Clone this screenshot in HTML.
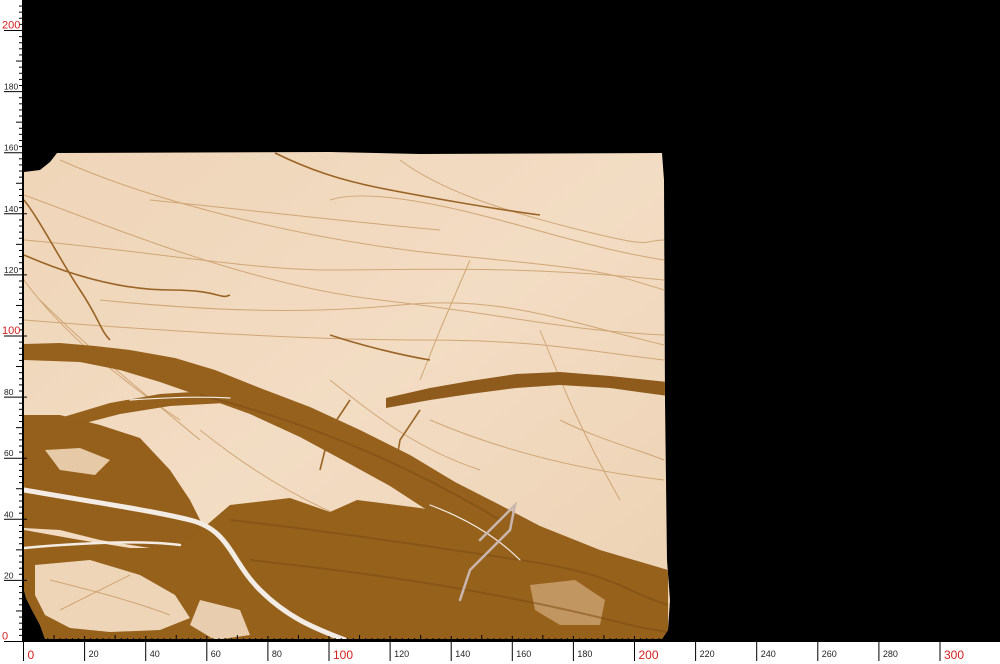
<!DOCTYPE html>
<html><head><meta charset="utf-8"><style>
html,body{margin:0;padding:0;background:#fff;width:1000px;height:664px;overflow:hidden}
svg{display:block}
text{font-family:"Liberation Sans",sans-serif}
</style></head><body>
<svg id="s" width="1000" height="664" viewBox="0 0 1000 664" xmlns="http://www.w3.org/2000/svg">
<rect x="0" y="0" width="1000" height="664" fill="#fff"/>
<rect x="23" y="0" width="977" height="641" fill="#000"/>
<defs>
<linearGradient id="bg" x1="0" y1="0" x2="1" y2="1">
<stop offset="0" stop-color="#efd5b8"/><stop offset="0.5" stop-color="#f2dcc3"/><stop offset="1" stop-color="#edd2b3"/>
</linearGradient>
<clipPath id="slab"><path d="M24,172 L40,170 L50,162 L57,153 L330,152 L420,154 L662,153 L664,180 L665,400 L667,560 L670,600 L668,630 L662,639 L45,639 L40,625 L32,610 L26,598 L24,590 Z"/></clipPath>
</defs>
<g clip-path="url(#slab)">
<rect x="20" y="150" width="660" height="495" fill="url(#bg)"/>
<g fill="none" stroke="#c89a64" stroke-width="1" opacity="0.8">
<path d="M24,195 C120,230 250,285 380,300 S560,330 664,335"/>
<path d="M60,160 C150,200 300,240 450,255 S600,270 664,290"/>
<path d="M24,240 C140,250 250,270 330,270 S520,265 664,280"/>
<path d="M100,300 C200,310 300,315 400,305 S560,320 664,345"/>
<path d="M24,320 C150,330 300,340 420,340 S580,350 664,360"/>
<path d="M330,200 C360,190 420,200 480,215 S600,250 664,260"/>
<path d="M150,200 C250,210 330,220 440,230"/>
<path d="M400,160 C440,190 500,210 580,230 S640,240 664,240"/>
<path d="M330,380 C380,420 420,450 480,470"/>
<path d="M430,420 C500,450 580,470 664,480"/>
<path d="M200,430 C250,470 300,500 350,520"/>
<path d="M560,420 C600,440 640,450 664,460"/>
<path d="M470,260 L440,330 L420,380"/>
<path d="M540,330 C560,380 580,430 620,500"/>
<path d="M24,430 C100,470 150,520 200,560"/>
<path d="M24,280 C60,330 120,380 180,420"/>
<path d="M40,300 C90,350 140,390 200,440"/>
</g>
<g fill="none" stroke="#9a6426" stroke-width="1.6">
<path d="M275,153 C310,170 340,180 380,188 S500,210 540,215"/>
<path d="M24,255 C70,275 120,290 170,290 S220,300 230,295"/>
<path d="M24,200 C40,220 60,260 80,290 S100,330 110,340"/>
<path d="M330,335 C360,345 400,355 430,360"/>
<path d="M350,400 L330,430 L320,470"/>
<path d="M420,410 L400,440 L395,470"/>
</g>
<path d="M24,344 L60,343 L95,346 L130,350 L175,358 L215,370 L260,388 L310,407 L360,430 L410,455 L455,482 L500,505 L540,526 L600,550 L668,570 L668,602 L620,592 L560,575 L510,556 L470,534 L430,512 L390,486 L350,464 L300,437 L250,414 L200,396 L160,382 L120,370 L80,362 L24,360 Z" fill="#96611c"/>
<path d="M386,398 L430,388 L470,381 L516,374 L560,372 L610,376 L668,382 L668,396 L610,388 L560,385 L516,388 L470,394 L430,400 L386,408 Z" fill="#8e5b1c"/>
<path d="M24,430 L60,418 L110,403 L160,394 L225,390 L255,395 L225,403 L170,406 L120,414 L70,427 L24,444 Z" fill="#96611c"/>
<path d="M24,415 L60,415 L100,425 L140,438 L170,470 L190,500 L205,530 L190,555 L150,548 L100,540 L60,530 L24,528 Z" fill="#95601b"/>
<path d="M45,450 L80,448 L110,460 L95,475 L60,470 Z" fill="#e6c9a6"/>
<path d="M180,548 L230,505 L290,498 L330,512 L357,500 L420,508 L480,518 L512,525 L560,538 L600,552 L640,566 L668,578 L668,640 L24,640 L24,530 L80,540 L130,548 Z" fill="#96611b"/>
<path d="M35,565 L90,560 L140,575 L175,595 L190,618 L160,630 L110,632 L70,628 L45,615 L35,595 Z" fill="#eed5b8"/>
<path d="M200,600 L240,610 L250,635 L215,640 L190,625 Z" fill="#e8cdae"/>
<path d="M530,585 L575,580 L605,600 L600,625 L560,625 L535,610 Z" fill="#c9a06c" opacity="0.85"/>
<g fill="none" stroke="#7a4a14" stroke-width="2" opacity="0.5">
<path d="M230,520 C320,530 420,545 520,560 S620,590 668,605"/>
<path d="M250,560 C340,570 420,580 520,600 S620,625 668,632"/>
<path d="M200,395 C300,420 400,460 500,520"/>
</g>
<g fill="none" stroke="#c89a64" stroke-width="1" opacity="0.8">
<path d="M50,580 C90,590 130,600 170,615"/>
<path d="M60,610 L100,590 L130,575"/>
</g>
<g fill="none" stroke="#f3ece4" stroke-linecap="round">
<path d="M24,490 C80,500 150,510 190,520 S230,560 260,590 S320,630 345,640" stroke-width="5"/>
<path d="M24,548 C80,543 140,540 180,545" stroke-width="2.5"/>
<path d="M430,505 C470,520 500,540 520,560" stroke-width="1.2"/>
<path d="M480,540 L500,520 L515,505 L510,530 L490,550 L470,570 L460,600" stroke="#c9b6ae" stroke-width="2.5"/>
<path d="M130,400 C160,398 200,396 230,398" stroke-width="1.2"/>
</g>
</g>
<g id="r" stroke="#000" stroke-width="1"></g>
<g id="t"></g>
</svg>
<script>
var r=document.getElementById('r'),t=document.getElementById('t'),ns='http://www.w3.org/2000/svg';
function L(x1,y1,x2,y2){var l=document.createElementNS(ns,'line');l.setAttribute('x1',x1);l.setAttribute('y1',y1);l.setAttribute('x2',x2);l.setAttribute('y2',y2);r.appendChild(l);}
function T(x,y,s,red,sz){var e=document.createElementNS(ns,'text');e.setAttribute('x',x);e.setAttribute('y',y);e.setAttribute('font-size',sz);e.setAttribute('fill',red?'#d42020':'#222');e.textContent=s;t.appendChild(e);}
var s=3.055,x0=23.5,y0=641.5;
L(22.5,0,22.5,642);L(22,641.5,1000,641.5);
for(var u=0;u<=320;u+=2){var x=x0+u*s;if(x>1000)break;
 if(u%20==0){L(x,636,x,661);T(x+4,u%100==0?659:657,String(u),u%100==0,u%100==0?12:9);}
 else if(u%10==0){L(x,635,x,641);}
 else L(x,638,x,641);}
for(var u=0;u<=210;u+=2){var y=y0-u*s;if(y<0)break;
 if(u%20==0){L(4,y,27,y);T(u%100==0?2:4,y-2,String(u),u%100==0,u%100==0?11:8.5);}
 else if(u%10==0){L(16,y,23,y);}
 else L(19,y,23,y);}
</script>
</body></html>
